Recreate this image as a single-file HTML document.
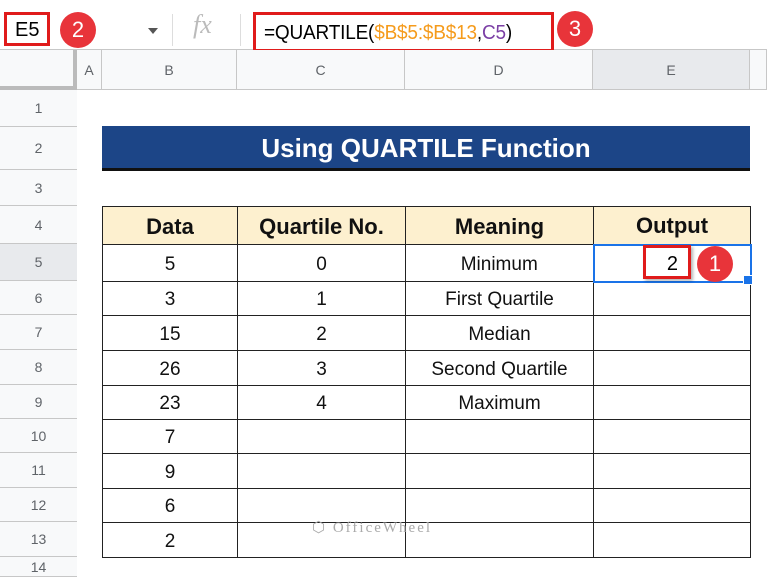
<!DOCTYPE html><html><head><style>
body{margin:0;width:767px;height:569px;overflow:hidden;background:#fff;font-family:"Liberation Sans",Arial,sans-serif;position:relative}
.a{position:absolute}
.rh{position:absolute;left:0;width:77px;background:#f8f9fa;border-bottom:1px solid #c7c7c7;color:#5f6368;font-size:14px;display:flex;align-items:center;justify-content:center;box-sizing:border-box}
.ch{position:absolute;top:50px;height:40px;background:#f8f9fa;border-right:1px solid #c7c7c7;border-bottom:1px solid #c7c7c7;color:#5f6368;font-size:14px;display:flex;align-items:center;justify-content:center;box-sizing:border-box}
table{position:absolute;left:102px;top:206px;border-collapse:collapse;table-layout:fixed}
td{border:1.5px solid #222;text-align:center;font-size:19px;color:#111;padding:3px 0 0 0}
th{border:1.5px solid #222;background:#fdf0cf;font-size:22px;font-weight:bold;color:#111;padding:2px 0 0 0}
.badge{position:absolute;width:36px;height:36px;border-radius:50%;background:#e8343a;color:#fff;font-size:22px;display:flex;align-items:center;justify-content:center}
</style></head><body>
<div class="a" style="left:0;top:0;width:767px;height:50px;border-bottom:1px solid #c7c7c7;box-sizing:border-box"></div>
<div class="a" style="left:4px;top:12px;width:46px;height:34px;border:3px solid #e01b1b;box-sizing:border-box;font-size:20px;padding:4px 0 0 8px">E5</div>
<div class="badge" style="left:60px;top:12px">2</div>
<div class="a" style="left:148px;top:28px;width:0;height:0;border-left:5px solid transparent;border-right:5px solid transparent;border-top:6px solid #555"></div>
<div class="a" style="left:172px;top:14px;width:1px;height:32px;background:#ddd"></div>
<div class="a" style="left:193px;top:10px;font-family:'Liberation Serif',serif;font-style:italic;font-size:26px;color:#bbb">fx</div>
<div class="a" style="left:240px;top:14px;width:1px;height:32px;background:#ddd"></div>
<div class="a" style="left:253px;top:12px;width:301px;height:40px;border:3px solid #e01b1b;box-sizing:border-box;font-size:20px;padding:7px 0 0 8px;white-space:nowrap;letter-spacing:-0.2px"><span style="display:inline-block;transform:scaleX(0.95);transform-origin:left">=QUARTILE(<span style="color:#f59b1c">$B$5:$B$13</span>,<span style="color:#7b3fa5">C5</span>)</span></div>
<div class="badge" style="left:557px;top:11px">3</div>
<div class="a" style="left:0;top:50px;width:77px;height:40px;background:#f8f9fa;border-right:4px solid #bbb;border-bottom:4px solid #bbb;box-sizing:border-box"></div>
<div class="ch" style="left:77px;width:25px">A</div>
<div class="ch" style="left:102px;width:135px">B</div>
<div class="ch" style="left:237px;width:168px">C</div>
<div class="ch" style="left:405px;width:188px">D</div>
<div class="ch" style="left:593px;width:157px;background:#e8eaed">E</div>
<div class="ch" style="left:750px;width:17px"></div>
<div class="a" style="left:76px;top:90px;width:1px;height:479px;background:#c7c7c7"></div>
<div class="rh" style="top:90px;height:37px">1</div>
<div class="rh" style="top:127px;height:43px">2</div>
<div class="rh" style="top:170px;height:36px">3</div>
<div class="rh" style="top:206px;height:38px">4</div>
<div class="rh" style="top:244px;height:37px;background:#e8eaed">5</div>
<div class="rh" style="top:281px;height:34px">6</div>
<div class="rh" style="top:315px;height:35px">7</div>
<div class="rh" style="top:350px;height:35px">8</div>
<div class="rh" style="top:385px;height:34px">9</div>
<div class="rh" style="top:419px;height:34px">10</div>
<div class="rh" style="top:453px;height:35px">11</div>
<div class="rh" style="top:488px;height:34px">12</div>
<div class="rh" style="top:522px;height:35px">13</div>
<div class="rh" style="top:557px;height:20px">14</div>
<div class="a" style="left:102px;top:126px;width:648px;height:42px;background:#1c4587;border-bottom:3px solid #111;color:#fff;font-weight:bold;font-size:26px;text-align:center;line-height:45px">Using QUARTILE Function</div>
<table>
<colgroup><col style="width:135px"><col style="width:168px"><col style="width:188px"><col style="width:157px"></colgroup>
<tr style="height:38px"><th>Data</th><th>Quartile No.</th><th>Meaning</th><th>Output</th></tr>
<tr style="height:37px"><td>5</td><td>0</td><td>Minimum</td><td style="border:2px solid #1a73e8"></td></tr>
<tr style="height:34px"><td>3</td><td>1</td><td>First Quartile</td><td></td></tr>
<tr style="height:35px"><td>15</td><td>2</td><td>Median</td><td></td></tr>
<tr style="height:35px"><td>26</td><td>3</td><td>Second Quartile</td><td></td></tr>
<tr style="height:34px"><td>23</td><td>4</td><td>Maximum</td><td></td></tr>
<tr style="height:34px"><td>7</td><td></td><td></td><td></td></tr>
<tr style="height:35px"><td>9</td><td></td><td></td><td></td></tr>
<tr style="height:34px"><td>6</td><td></td><td></td><td></td></tr>
<tr style="height:35px"><td>2</td><td></td><td></td><td></td></tr>
</table>
<div class="a" style="left:643px;top:245px;width:48px;height:34px;border:3px solid #e01b1b;box-sizing:border-box;font-size:20px;text-align:right;padding:5px 10px 0 0;box-shadow:2px 2px 3px rgba(0,0,0,.3);background:#fff">2</div>
<div class="badge" style="left:697px;top:246px">1</div>
<div class="a" style="left:743px;top:275px;width:8px;height:8px;background:#1a73e8;border:1px solid #fff"></div>
<div class="a" style="left:312px;top:518px;font-family:'Liberation Serif',serif;font-size:15px;letter-spacing:2px;color:#aaa">⬡ OfficeWheel</div>
</body></html>
